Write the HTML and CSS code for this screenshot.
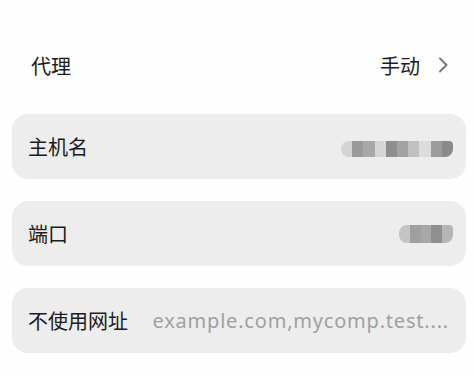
FILE: index.html
```html
<!DOCTYPE html>
<html lang="zh">
<head>
<meta charset="utf-8">
<link rel="stylesheet" href="styles.css">
</head>
<body>
<div class="page">
  <div class="header-row">
    <span class="label">代理</span>
    <span class="value-group">
      <span class="value">手动</span>
      <svg class="chevron" width="12" height="16" viewBox="0 0 12 16"><path d="M3 1.5 L9.5 8 L3 14.5" fill="none" stroke="#777" stroke-width="2" stroke-linecap="round" stroke-linejoin="round"/></svg>
    </span>
  </div>
  <div class="card">
    <span class="label">主机名</span>
    <span class="blur blur-host">
      <i style="background:#d4d4d4"></i><i style="background:#9a9a9a"></i><i style="background:#a8a8a8"></i><i style="background:#d6d6d6"></i><i style="background:#8e8e8e"></i><i style="background:#a3a3a3"></i><i style="background:#c0c0c0"></i><i style="background:#dcdcdc"></i><i style="background:#9c9c9c"></i><i style="background:#8a8a8a"></i>
    </span>
  </div>
  <div class="card">
    <span class="label">端口</span>
    <span class="blur blur-port">
      <i style="background:#c4c4c4"></i><i style="background:#9f9f9f"></i><i style="background:#a8a8a8"></i><i style="background:#8f8f8f"></i><i style="background:#b5b5b5"></i>
    </span>
  </div>
  <div class="card">
    <span class="label">不使用网址</span>
    <span class="placeholder">example.com,mycomp.test....</span>
  </div>
</div>
</body>
</html>
```
FILE: styles.css
```css
html, body {
  margin: 0;
  padding: 0;
  background: #fdfefd;
}
body {
  font-family: "Noto Sans", "Noto Sans CJK SC", sans-serif;
  color: #1b1b1b;
}
.page {
  padding: 37px 8px 0 12px;
  display: flex;
  flex-direction: column;
  gap: 21px;
}
.header-row {
  height: 56px;
  display: flex;
  align-items: center;
  justify-content: space-between;
  padding: 0 17px 0 19px;
}
.label {
  font-size: 20px;
  font-family: "Noto Sans CJK SC", sans-serif;
  white-space: nowrap;
}
.value-group {
  display: flex;
  align-items: center;
  gap: 17px;
}
.value {
  font-size: 20px;
  font-family: "Noto Sans CJK SC", sans-serif;
}
.chevron {
  display: block;
}
.card {
  height: 65px;
  background: #ededed;
  border-radius: 16px;
  display: flex;
  align-items: center;
  justify-content: space-between;
  padding: 0 13px 0 16px;
}
.card + .card {
  margin-top: 1px;
}
.blur {
  display: flex;
  height: 16px;
  border-radius: 8px 4px 8px 8px;
  overflow: hidden;
  filter: blur(0.6px);
}
.blur i {
  display: block;
  flex: 1;
}
.blur-host {
  width: 112px;
  margin-top: 4px;
}
.blur-port {
  width: 54px;
  height: 18px;
}
.placeholder {
  font-size: 20px;
  letter-spacing: 0.8px;
  color: #a0a0a0;
  white-space: nowrap;
  margin-right: 4px;
}
```
